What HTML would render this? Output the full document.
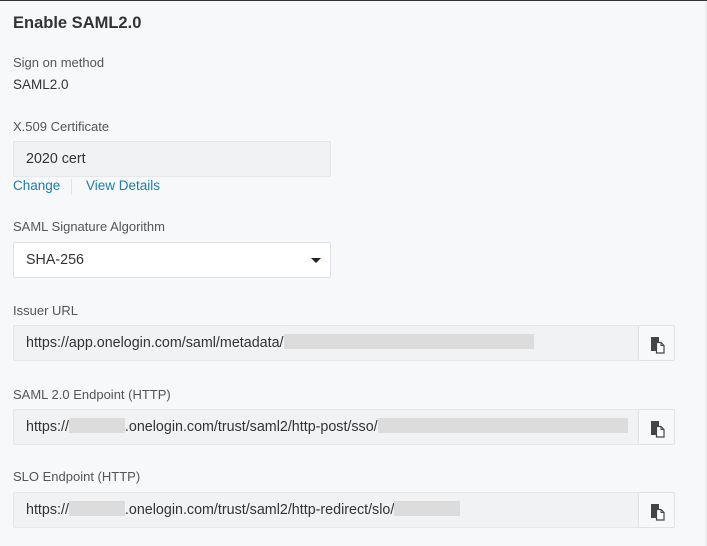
<!DOCTYPE html>
<html><head><meta charset="utf-8"><style>
*{margin:0;padding:0;box-sizing:border-box}
body{width:707px;height:546px;overflow:hidden;background:#f7f8fa;font-family:"Liberation Sans",Arial,sans-serif;color:#333;position:relative}
.a{position:absolute;white-space:nowrap}
.top{left:0;top:0;width:707px;height:1px;background:#333}
.rb{left:705px;top:1px;width:2px;height:545px;background:#eceef0}
.lbl{font-size:13px;color:#555}
.fld{background:#f1f2f3;border:1px solid #e6e7e9;border-radius:2px;font-size:14.3px;color:#333;padding-left:12px;line-height:34px}
.blur{display:inline-block;background:#dcdcdc;height:15px;vertical-align:-2px}
.btn{background:#f7f8fa;border:1px solid #e1e3e6;border-radius:2px;width:37px;height:36px}
.btn svg{position:absolute;left:11px;top:10px}
</style></head><body>
<div class="a top"></div><div class="a rb"></div>
<div class="a" style="left:13px;top:14px;font-size:16.5px;font-weight:bold;color:#333">Enable SAML2.0</div>
<div class="a lbl" style="left:13px;top:55px">Sign on method</div>
<div class="a" style="left:13px;top:77px;font-size:13.5px;color:#333">SAML2.0</div>
<div class="a lbl" style="left:13px;top:119px">X.509 Certificate</div>
<div class="a fld" style="left:13px;top:141px;width:318px;height:36px">2020 cert</div>
<div class="a" style="left:13px;top:178px;font-size:13.5px;color:#1a7ea6">Change</div>
<div class="a" style="left:71px;top:179px;width:1px;height:16px;background:#e1e3e6"></div>
<div class="a" style="left:86px;top:178px;font-size:13.5px;color:#1a7ea6">View Details</div>
<div class="a lbl" style="left:13px;top:219px">SAML Signature Algorithm</div>
<div class="a fld" style="left:13px;top:242px;width:318px;height:36px;background:#fff;border-color:#dfe1e4">SHA-256</div>
<div class="a" style="left:311px;top:258px;width:0;height:0;border-left:5px solid transparent;border-right:5px solid transparent;border-top:5px solid #222"></div>
<div class="a lbl" style="left:13px;top:303px">Issuer URL</div>
<div class="a fld" style="left:13px;top:325px;width:626px;height:36px">https://app.onelogin.com/saml/metadata/<span class="blur" style="width:250px"></span></div>
<div class="a btn" style="left:638px;top:325px"><svg width="16" height="18" viewBox="0 0 16 18"><rect x="1" y="1" width="8" height="14" fill="#444"/><path d="M6.5 6.5h4.5l3 3v7.5h-7.5z" fill="#fff" stroke="#444" stroke-width="1.2"/><path d="M11 6.5v3h3" fill="none" stroke="#444" stroke-width="1"/></svg></div>
<div class="a lbl" style="left:13px;top:387px">SAML 2.0 Endpoint (HTTP)</div>
<div class="a fld" style="left:13px;top:409px;width:626px;height:36px;overflow:hidden">https://<span class="blur" style="width:56px"></span>.onelogin.com/trust/saml2/http-post/sso/<span class="blur" style="width:250px"></span></div>
<div class="a btn" style="left:638px;top:409px"><svg width="16" height="18" viewBox="0 0 16 18"><rect x="1" y="1" width="8" height="14" fill="#444"/><path d="M6.5 6.5h4.5l3 3v7.5h-7.5z" fill="#fff" stroke="#444" stroke-width="1.2"/><path d="M11 6.5v3h3" fill="none" stroke="#444" stroke-width="1"/></svg></div>
<div class="a lbl" style="left:13px;top:469px">SLO Endpoint (HTTP)</div>
<div class="a fld" style="left:13px;top:492px;width:626px;height:36px">https://<span class="blur" style="width:56px"></span>.onelogin.com/trust/saml2/http-redirect/slo/<span class="blur" style="width:66px"></span></div>
<div class="a btn" style="left:638px;top:492px"><svg width="16" height="18" viewBox="0 0 16 18"><rect x="1" y="1" width="8" height="14" fill="#444"/><path d="M6.5 6.5h4.5l3 3v7.5h-7.5z" fill="#fff" stroke="#444" stroke-width="1.2"/><path d="M11 6.5v3h3" fill="none" stroke="#444" stroke-width="1"/></svg></div>
</body></html>
